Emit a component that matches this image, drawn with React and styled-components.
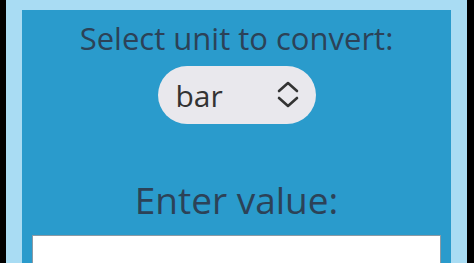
import React from "react";
import styled, { createGlobalStyle } from "styled-components";

const GlobalStyle = createGlobalStyle`
    html, body {
        margin: 0;
        padding: 0;
        background: #000;
    }
    body {
        font-family: "Open Sans", "Noto Sans", sans-serif;
    }
`;

const Page = styled.div`
    background-color: #000;
    padding: 0 7px 0 6px;
    height: 263px;
    overflow: hidden;
`;

const Frame = styled.div`
    height: 100%;
    background-color: #a9dcf3;
    padding: 10px 16px 0 16px;
    box-sizing: border-box;
`;

const Panel = styled.div`
    background-color: #2a9bcc;
    height: 100%;
    padding: 7px 10px 0 10px;
    box-sizing: border-box;
    display: flex;
    flex-direction: column;
    align-items: center;
    color: #2c4257;
`;

const Label = styled.div`
    flex: none;
    font-size: ${(p) => p.size}px;
    line-height: normal;
    text-align: center;
    margin-top: ${(p) => p.top || 0}px;
`;

const SelectWrap = styled.div`
    flex: none;
    position: relative;
    margin-top: 7px;
    width: 158px;
    height: 58px;
`;

const UnitSelect = styled.select`
    appearance: none;
    -webkit-appearance: none;
    display: block;
    box-sizing: border-box;
    width: 158px;
    height: 58px;
    border: none;
    border-radius: 29px;
    background-color: #e9e8ed;
    color: #333;
    font-family: "Open Sans", "Noto Sans", sans-serif;
    font-size: 30px;
    padding: 0 0 0 18px;
    outline: none;
`;

const Chevrons = styled.svg`
    position: absolute;
    right: 16px;
    top: 15px;
    pointer-events: none;
`;

const ValueInput = styled.input`
    flex: none;
    margin-top: 10px;
    width: 100%;
    height: 40px;
    box-sizing: border-box;
    border: 1px solid #8a9aa5;
    background: #fff;
    font-size: 24px;
`;

const App = () => {
    return (
        <>
            <GlobalStyle />
            <Page>
                <Frame>
                    <Panel>
                        <Label size={31}>Select unit to convert:</Label>
                        <SelectWrap>
                            <UnitSelect defaultValue="bar">
                                <option value="bar">bar</option>
                                <option value="pa">Pa</option>
                                <option value="psi">psi</option>
                            </UnitSelect>
                            <Chevrons width="24" height="28" viewBox="0 0 24 28">
                                <path
                                    d="M3 10 L12 2 L21 10 M3 17 L12 25 L21 17"
                                    fill="none"
                                    stroke="#333"
                                    strokeWidth="2.6"
                                    strokeLinecap="round"
                                    strokeLinejoin="round"
                                />
                            </Chevrons>
                        </SelectWrap>
                        <Label size={37} top={50}>
                            Enter value:
                        </Label>
                        <ValueInput type="text" />
                    </Panel>
                </Frame>
            </Page>
        </>
    );
};

export default App;
